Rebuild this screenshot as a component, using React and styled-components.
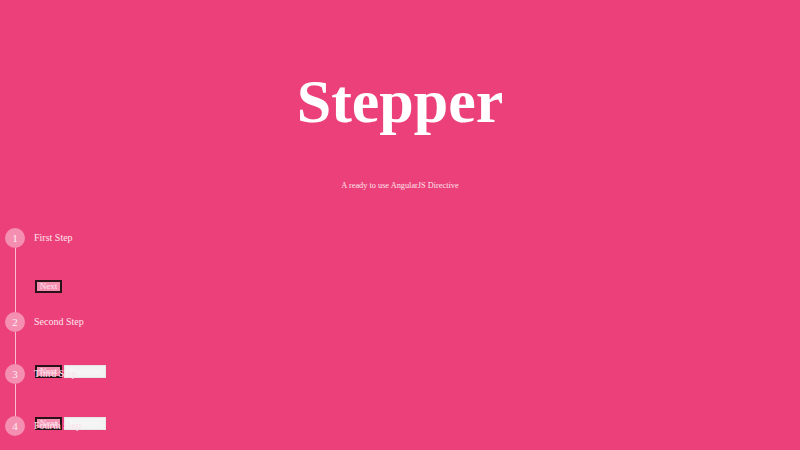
import React from "react";
import styled, { createGlobalStyle } from "styled-components";

const GlobalStyle = createGlobalStyle`
  html, body {
    margin: 0;
    padding: 0;
    background: #ec407a;
    font-family: "Liberation Serif", "Times New Roman", serif;
    color: #fff;
  }
`;

const Page = styled.div`
  width: 800px;
  height: 450px;
  overflow: hidden;
`;

const Header = styled.header`
  display: flex;
  flex-direction: column;
  align-items: center;
  padding-top: 70px;
`;

const Title = styled.h1`
  margin: 0;
  font-size: 62px;
  line-height: 62px;
  font-weight: bold;
`;

const Subtitle = styled.p`
  margin: 48px 0 0;
  font-size: 8.3px;
  line-height: 12px;
  color: #fce4ec;
`;

const StepList = styled.ol`
  list-style: none;
  margin: 36px 0 0;
  padding: 0 0 0 5px;
`;

const Step = styled.li`
  display: grid;
  grid-template-columns: 20px 1fr;
  column-gap: 9px;
  min-height: ${(p) => p.$height}px;
`;

const Rail = styled.div`
  display: flex;
  flex-direction: column;
  align-items: center;
`;

const Circle = styled.span`
  width: 20px;
  height: 20px;
  border-radius: 50%;
  background: #f48fb1;
  color: #fdeef3;
  font-size: 11px;
  display: flex;
  align-items: center;
  justify-content: center;
  flex: none;
`;

const Line = styled.span`
  flex: 1;
  width: 1px;
  background: #f8bbd0;
`;

const Body = styled.div`
  position: relative;
`;

/* label sits above the action buttons when they share a row */
const Label = styled.div`
  position: relative;
  z-index: 1;
  font-size: 10px;
  line-height: 20px;
  color: #fce4ec;
`;

const Actions = styled.div`
  display: flex;
  gap: 2px;
  margin-left: 1px;
  ${(p) =>
    p.$overlay
      ? `position: absolute; top: 1px; left: 0;`
      : `margin-top: 32px;`}
`;

const Button = styled.button`
  font-family: "Liberation Serif", "Times New Roman", serif;
  font-size: 9px;
  line-height: 9px;
  height: 13px;
  padding: 0;
  margin: 0;
  text-align: center;
  border: ${(p) => (p.$primary ? "2px solid #2a1219" : "1px solid #e6e6e6")};
  background: ${(p) => (p.$primary ? "#f48fb1" : "#f3f3f3")};
  color: ${(p) => (p.$primary ? "#fce4ec" : "#f9f9f9")};
  width: ${(p) => (p.$primary ? 27 : 42)}px;
`;

const steps = [
  { n: 1, label: "First Step", height: 84, actions: ["next"] },
  { n: 2, label: "Second Step", height: 52, actions: [] },
  { n: 3, label: "Third Step", height: 52, actions: ["next", "prev"], overlay: true },
  { n: 4, label: "Fourth Step", height: 52, actions: ["next", "prev"], overlay: true, last: true },
];

export default function App() {
  return (
    <Page>
      <GlobalStyle />
      <Header>
        <Title>Stepper</Title>
        <Subtitle>A ready to use AngularJS Directive</Subtitle>
      </Header>
      <StepList>
        {steps.map((s) => (
          <Step key={s.n} $height={s.height}>
            <Rail>
              <Circle>{s.n}</Circle>
              {!s.last && <Line />}
            </Rail>
            <Body>
              <Label>{s.label}</Label>
              {s.actions.length > 0 && (
                <Actions $overlay={s.overlay}>
                  {s.actions.includes("next") && <Button $primary>Next</Button>}
                  {s.actions.includes("prev") && <Button>Previous</Button>}
                </Actions>
              )}
            </Body>
          </Step>
        ))}
      </StepList>
    </Page>
  );
}
